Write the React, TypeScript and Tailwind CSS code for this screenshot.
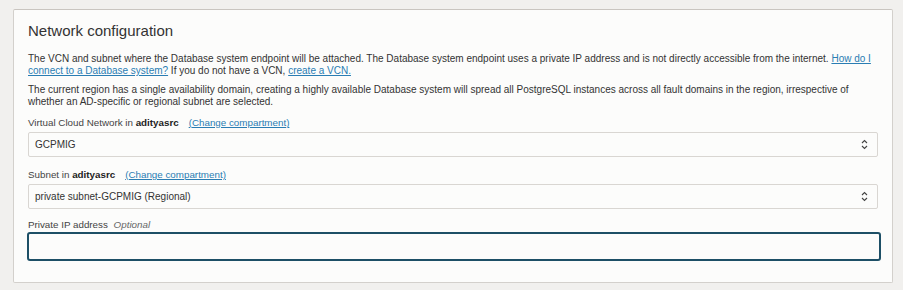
function SelectBox({ value }: { value: string }) {
    return (
        <div className="flex items-center justify-between h-[25px] pl-[6px] pr-[9px] border border-[#d9d6d2] rounded-[2px] bg-[#fcfcfb]">
            <span className="text-[10px] text-[#333]">{value}</span>
            <svg width="7" height="11" viewBox="0 0 7 11" fill="none" stroke="#444" strokeWidth="1.1">
                <path d="M1 4 L3.5 1.5 L6 4" />
                <path d="M1 7 L3.5 9.5 L6 7" />
            </svg>
        </div>
    );
}

function FieldLabel({ children }: { children: React.ReactNode }) {
    return <div className="text-[9.8px] leading-[12px] text-[#444]">{children}</div>;
}

export default function App() {
    const link = 'text-[#2a7db3] underline';
    return (
        <div className="w-[903px] h-[290px] bg-[#f1f0ee] pt-[9px] pl-[13px] font-['Liberation_Sans',Arial,sans-serif]">
            <div className="w-[880px] h-[274px] bg-[#fcfcfb] border border-[#d3d0cc] border-t-[#c9c5c0] rounded-[2px] px-[14px] pt-[12px]">
                <h2 className="text-[15px] leading-[18px] text-[#333]">Network configuration</h2>

                <p className="mt-[13px] text-[10px] leading-[12px] text-[#333]">
                    The VCN and subnet where the Database system endpoint will be attached. The Database system endpoint uses a private IP address and is not directly accessible from the internet.{' '}
                    <a className={link}>How do I connect to a Database system?</a> If you do not have a VCN, <a className={link}>create a VCN.</a>
                </p>
                <p className="mt-[7px] text-[10px] leading-[12px] text-[#333]">
                    The current region has a single availability domain, creating a highly available Database system will spread all PostgreSQL instances across all fault domains in the region, irrespective of whether an AD-specific or regional subnet are selected.
                </p>

                <div className="mt-[9px]">
                    <FieldLabel>
                        Virtual Cloud Network in <b className="text-[#222]">adityasrc</b>
                        <a className={`${link} ml-[10px]`}>(Change compartment)</a>
                    </FieldLabel>
                    <div className="mt-[3px]">
                        <SelectBox value="GCPMIG" />
                    </div>
                </div>

                <div className="mt-[12px]">
                    <FieldLabel>
                        Subnet in <b className="text-[#222]">adityasrc</b>
                        <a className={`${link} ml-[10px]`}>(Change compartment)</a>
                    </FieldLabel>
                    <div className="mt-[3px]">
                        <SelectBox value="private subnet-GCPMIG (Regional)" />
                    </div>
                </div>

                <div className="mt-[10px]">
                    <FieldLabel>
                        Private IP address <i className="ml-[3px] text-[#666]">Optional</i>
                    </FieldLabel>
                    <input className="mt-[1px] block w-[854px] -ml-[1px] h-[29px] border-2 border-[#1d4f66] rounded-[3px] bg-[#fcfcfb] outline-none" />
                </div>
            </div>
        </div>
    );
}
